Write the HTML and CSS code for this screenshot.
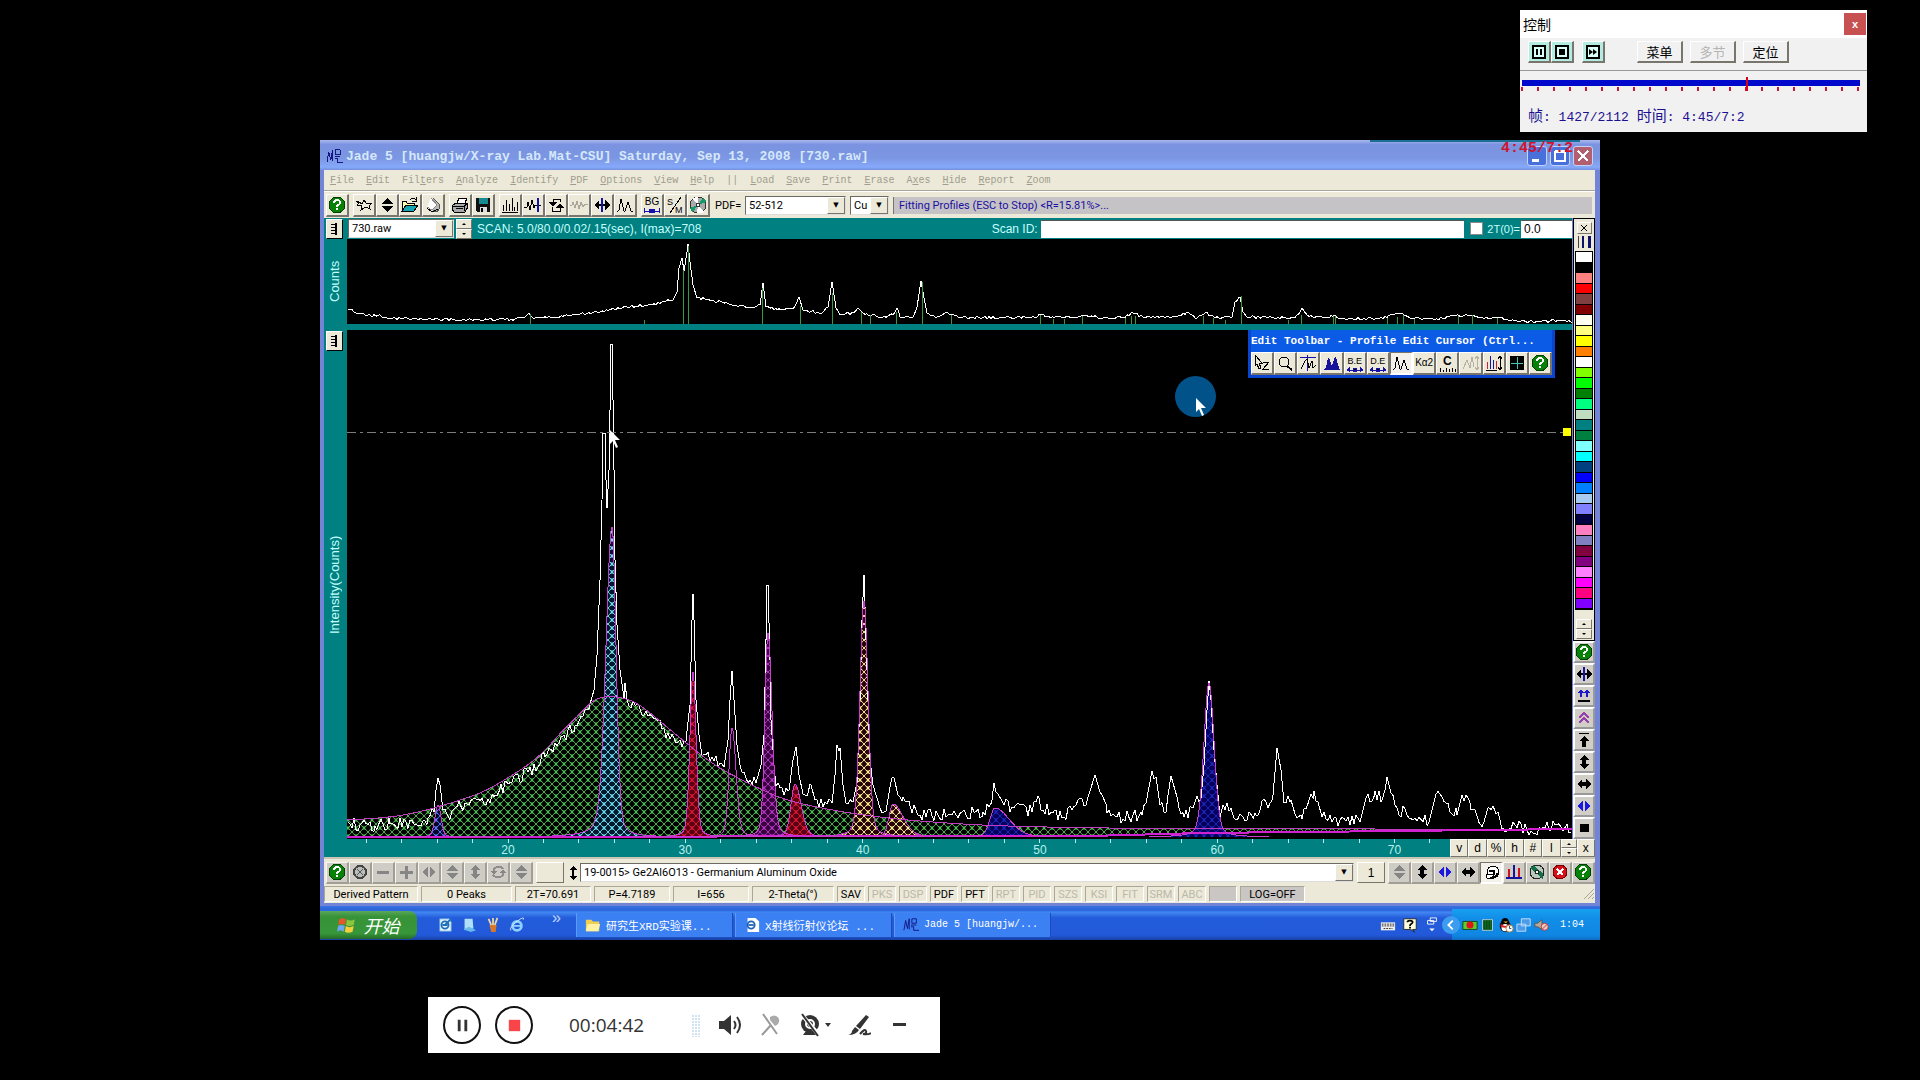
FILE: index.html
```html
<!DOCTYPE html>
<html lang="zh">
<head>
    <meta charset="UTF-8">
    <meta name="viewport" content="width=device-width, initial-scale=1.0">
    <title>Jade 5</title>
    <link rel="stylesheet" href="styles.css">
</head>
<body>
    <svg class="defs" width="0" height="0" aria-hidden="true">
        <symbol id="i-help" viewBox="0 0 18 18"><circle cx="9" cy="9" r="8" fill="#078207" stroke="#063f06"/><path d="M6 7q0-3 3-3t3 3q0 1-2 2-1 1-1 2 M9 12v2" fill="none" stroke="#fff" stroke-width="2"/></symbol>
        <symbol id="i-star" viewBox="0 0 18 18"><path d="M1 5l3 1 3 2 2-4 2 3h6l-3 3 1 3-4-2-5 3 1-4-5-1 2-2z" fill="none" stroke="#000"/></symbol>
        <symbol id="i-ud" viewBox="0 0 18 18"><path d="M9 2l6 6H3z M9 16l6-6H3z"/></symbol>
        <symbol id="i-open" viewBox="0 0 18 18"><path d="M1 15V5h4l1 2h7v3" fill="#ffffb0" stroke="#000"/><path d="M1 15l4-6h12l-4 6z" fill="#12a6b5" stroke="#000"/><path d="M9 4q3-3 6 0 M15 1v4h-4" fill="none" stroke="#000"/></symbol>
        <symbol id="i-disk" viewBox="0 0 18 18"><path d="M9 2l7 7q0 6-5 7l-2-2" fill="#b8b8b8" stroke="#555"/><path d="M7 2l6 7-5 5-5-3" fill="#fff" stroke="#888"/><path d="M3 12l5 4 6-3" fill="none" stroke="#000"/></symbol>
        <symbol id="i-print" viewBox="0 0 18 18"><path d="M6 7l2-5h8l-2 5" fill="#fff" stroke="#000"/><path d="M2 9l3-2h11l1 4-3 5H3l-2-3z" fill="#aaa" stroke="#000"/><path d="M2 10h11v5 M5 12h7 M13 10l3-2" fill="none" stroke="#000"/></symbol>
        <symbol id="i-save" viewBox="0 0 18 18"><path d="M2 2h14v14H3l-1-1z" fill="#111"/><path d="M5 2h9v6H5z" fill="#168b91"/><path d="M6 11h7v5H6z" fill="#ddd"/><path d="M7 12h2v4H7z"/></symbol>
        <symbol id="i-sticks" viewBox="0 0 18 18"><path d="M1 16h16 M2 15V9 M5 15V4 M8 15V8 M11 15V2 M13 15v-4 M16 15V6" fill="none" stroke="#000"/></symbol>
        <symbol id="i-wave" viewBox="0 0 18 18"><path d="M0 11h3l1-5 2 8 2-10 2 8 1-3h6" fill="none" stroke="#000"/><path d="M14 2v14" stroke="#1412a8" stroke-width="2"/></symbol>
        <symbol id="i-swap" viewBox="0 0 18 18"><path d="M13 6V3H6v4 M5 11v4h8v-3" fill="none" stroke="#000"/><path d="M2 6h8l-4 5z M9 12h8l-4-5z"/></symbol>
        <symbol id="i-noise" viewBox="0 0 18 18"><path d="M0 9h2l1-3 2 6 2-7 2 8 2-7 2 5 2-3h3" fill="none" stroke="#aaa69a"/></symbol>
        <symbol id="i-split" viewBox="0 0 18 18"><path d="M9 2v14" stroke="#1412a8" stroke-width="2"/><path d="M1 9l5-5v10z M17 9l-5-5v10z"/><path d="M4 8h4v2H4z M10 8h4v2h-4z"/></symbol>
        <symbol id="i-peaks" viewBox="0 0 18 18"><path d="M1 16l2-2 2-11 3 12h1l3-9 3 9 2 1" fill="none" stroke="#000"/></symbol>
        <symbol id="i-cd" viewBox="0 0 18 18"><circle cx="9" cy="9" r="8" fill="#a9aaa9" stroke="#333"/><path d="M9 9L3 3q3-2 6-2z M9 9l6 7q-4 2-7 1z" fill="#fff"/><path d="M9 9l8-3q0-3-3-4z M9 9l-8 3q1 3 3 4z" fill="#159b6a"/><circle cx="9" cy="9" r="2" fill="#fff" stroke="#333"/></symbol>
        <symbol id="i-scale" viewBox="0 0 14 16"><path d="M4 3h6 M4 6h6 M4 9h6 M4 12h6" stroke="#000" stroke-width="1"/><path d="M9 2v12" stroke="#000" stroke-width="2"/></symbol>
        <symbol id="i-mag" viewBox="0 0 18 18"><circle cx="8" cy="8" r="5" fill="none" stroke="#000"/><path d="M11 12l5 4" stroke="#000" stroke-width="2"/></symbol>
        <symbol id="i-cut" viewBox="0 0 18 18"><path d="M1 3h16 M8 1v16" stroke="#1412a8"/><path d="M2 15l4-8 2-2 2 9 3-7 1 7 3-3" fill="none" stroke="#000"/></symbol>
        <symbol id="i-fill" viewBox="0 0 18 18"><path d="M1 16l2-3 2-9h1l3 8 3-9h1l3 11 1 2z" fill="#15139b"/></symbol>
        <symbol id="i-pkud" viewBox="0 0 18 18"><path d="M1 15l4-9 3 8 2-11 2 10 M15 3v12 M13 5l2-3 2 3 M13 13l2 3 2-3" fill="none" stroke="#b5b1a4"/></symbol>
        <symbol id="i-stkud" viewBox="0 0 18 18"><path d="M1 16h11 M15 3v12 M13 5l2-3 2 3 M13 13l2 3 2-3" fill="none" stroke="#000"/><path d="M2 15V8 M11 15V7" stroke="#d02030"/><path d="M5 15V2 M8 15V6" stroke="#1412a8"/></symbol>
        <symbol id="i-grid" viewBox="0 0 18 18"><path d="M2 2h14v14H2z"/><path d="M9 3v12 M3 9h12" stroke="#49c4b0"/></symbol>
        <symbol id="i-up2" viewBox="0 0 18 18"><path d="M3 14h12" stroke="#000" stroke-width="2"/><path d="M5 5h2v5H5z M11 5h2v5h-2z M3 6l3-4 3 4z M9 6l3-4 3 4z" fill="#1b18c8"/></symbol>
        <symbol id="i-chev" viewBox="0 0 18 18"><path d="M4 9l5-5 5 5 M4 14l5-5 5 5" fill="none" stroke="#9a3fae" stroke-width="2"/></symbol>
        <symbol id="i-top" viewBox="0 0 18 18"><path d="M4 2h10v1H4z M9 5l5 5h-3v6H7v-6H4z"/></symbol>
        <symbol id="i-v" viewBox="0 0 18 18"><path d="M9 2l5 5h-3v4h3l-5 5-5-5h3V7H4z"/></symbol>
        <symbol id="i-h" viewBox="0 0 18 18"><path d="M2 9l5-5v3h4V4l5 5-5 5v-3H7v3z"/></symbol>
        <symbol id="i-lr" viewBox="0 0 18 18"><path d="M2 9l6-5v10z M16 9l-6-5v10z"/></symbol>
        <symbol id="i-sq" viewBox="0 0 18 18"><path d="M5 5h9v8H5z"/></symbol>
        <symbol id="i-x" viewBox="0 0 18 18"><circle cx="9" cy="9" r="6" fill="#bbb" stroke="#444" stroke-width="2"/><path d="M6 6l6 6 M12 6l-6 6" stroke="#555"/></symbol>
        <symbol id="i-minus" viewBox="0 0 18 18"><path d="M3 8h12v3H3z"/></symbol>
        <symbol id="i-plus" viewBox="0 0 18 18"><path d="M3 8h5V3h3v5h5v3h-5v5H8v-5H3z"/></symbol>
        <symbol id="i-loop" viewBox="0 0 18 18"><path d="M14 6q-4-5-9 0v3 M4 12q5 5 10 0V9" fill="none" stroke="#8d8d8d" stroke-width="2"/><path d="M2 8h6l-3 4z M11 10h6l-3-4z"/></symbol>
        <symbol id="i-ball" viewBox="0 0 18 18"><circle cx="11" cy="9" r="6" fill="#fff" stroke="#000"/><path d="M4 11h7v4H5z" fill="#fff" stroke="#000"/><path d="M7 8h5v4 M8 15l5-1 3-4" fill="none" stroke="#000" stroke-width="2"/></symbol>
        <symbol id="i-bars" viewBox="0 0 18 18"><path d="M1 15h16" stroke="#15139b" stroke-width="2"/><path d="M4 14V6" stroke="#d01020" stroke-width="2"/><path d="M9 14V2" stroke="#15139b" stroke-width="2"/><path d="M14 14V5" stroke="#d01020" stroke-width="2"/></symbol>
        <symbol id="i-disc" viewBox="0 0 18 18"><circle cx="9" cy="9" r="7" fill="#b9c7bd" stroke="#222"/><path d="M3 4l12 11 M5 3l10 9" stroke="#12704a" stroke-width="2"/><circle cx="9" cy="9" r="2" fill="#fff" stroke="#222"/></symbol>
        <symbol id="i-stop" viewBox="0 0 18 18"><circle cx="9" cy="9" r="7" fill="#d9101c" stroke="#700"/><path d="M6 6l6 6 M12 6l-6 6" stroke="#fff" stroke-width="2"/></symbol>
        <symbol id="i-jade" viewBox="0 0 18 18"><path d="M1 15l2-11 2 9 2-11v12 M10 2h5v5h-5z M9 9h6 M9 11h3v4h6" fill="none" stroke="#10107a" stroke-width="1"/></symbol>
        <symbol id="i-ie" viewBox="0 0 18 18"><circle cx="9" cy="10" r="5" fill="none" stroke="#8fd2ff" stroke-width="3"/><path d="M5 10h9" stroke="#8fd2ff" stroke-width="2"/><path d="M2 15Q0 12 9 5t7-2" fill="none" stroke="#d8f0ff"/></symbol>
        <symbol id="i-cursor" viewBox="0 0 12 20"><path d="M1 1v14l3-3 3 7 2-1-3-7h5z" fill="#fff"/></symbol>
    </svg>

    <section class="control">
        <header class="control-title"><span>控制</span><button class="control-close" aria-label="关闭">x</button></header>
        <div class="control-buttons">
            <button class="mini" aria-label="pause"><svg viewBox="0 0 18 18"><path d="M3 3h12v12H3z" fill="#d8fff8" stroke="#000" stroke-width="2"/><path d="M6 6h2v6H6z M10 6h2v6h-2z"/></svg></button>
            <button class="mini" aria-label="stop"><svg viewBox="0 0 18 18"><path d="M3 3h12v12H3z" fill="#d8fff8" stroke="#000" stroke-width="2"/><path d="M6 6h6v6H6z"/></svg></button>
            <button class="mini mini-ff" aria-label="forward"><svg viewBox="0 0 18 18"><path d="M3 3h12v12H3z" fill="#d8fff8" stroke="#000" stroke-width="2"/><path d="M5 6l4 3-4 3z M9 6l4 3-4 3z"/></svg></button>
            <button class="word word-first">菜单</button>
            <button class="word" disabled>多节</button>
            <button class="word">定位</button>
        </div>
        <svg class="control-track" id="track" aria-hidden="true"></svg>
        <p class="control-info"><b>帧</b>: 1427/2112 <b>时间</b>: 4:45/7:2</p>
    </section>

    <main class="screen">
        <section class="jade">
            <header class="title">
                <svg class="title-icon"><use href="#i-jade"/></svg>
                <h1>Jade 5 [huangjw/X-ray Lab.Mat-CSU] Saturday, Sep 13, 2008 [730.raw]</h1>
                <button class="cap" aria-label="minimize"><svg viewBox="0 0 18 18"><path d="M4 12h7v3H4z" fill="#fff"/></svg></button>
                <button class="cap" aria-label="maximize"><svg viewBox="0 0 18 18"><path d="M4 5h10v9H4z M4 4h10" fill="none" stroke="#fff" stroke-width="2"/></svg></button>
                <button class="cap cap-close" aria-label="close"><svg viewBox="0 0 18 18"><path d="M4 4l10 10 M14 4L4 14" stroke="#fff" stroke-width="2"/></svg></button>
            </header>
            <span class="stamp-line"></span>
            <span class="stamp">4:45/7:2</span>

            <nav class="menu">
                <a href="#"><u>F</u>ile</a><a href="#"><u>E</u>dit</a><a href="#">Fil<u>t</u>ers</a><a href="#"><u>A</u>nalyze</a><a href="#"><u>I</u>dentify</a><a href="#"><u>P</u>DF</a><a href="#"><u>O</u>ptions</a><a href="#"><u>V</u>iew</a><a href="#"><u>H</u>elp</a><a href="#">||</a><a href="#"><u>L</u>oad</a><a href="#"><u>S</u>ave</a><a href="#"><u>P</u>rint</a><a href="#"><u>E</u>rase</a><a href="#">A<u>x</u>es</a><a href="#"><u>H</u>ide</a><a href="#"><u>R</u>eport</a><a href="#"><u>Z</u>oom</a>
            </nav>

            <div class="toolbar">
                <div class="group"><button class="tb" aria-label="help"><svg><use href="#i-help"/></svg></button></div>
                <div class="group">
                    <button class="tb" aria-label="thumbnail"><svg><use href="#i-star"/></svg></button>
                    <button class="tb" aria-label="next file"><svg><use href="#i-ud"/></svg></button>
                    <button class="tb" aria-label="open"><svg><use href="#i-open"/></svg></button>
                    <button class="tb" aria-label="read"><svg><use href="#i-disk"/></svg></button>
                </div>
                <div class="group">
                    <button class="tb" aria-label="print"><svg><use href="#i-print"/></svg></button>
                    <button class="tb" aria-label="save"><svg><use href="#i-save"/></svg></button>
                </div>
                <div class="group">
                    <button class="tb" aria-label="find peaks"><svg><use href="#i-sticks"/></svg></button>
                    <button class="tb" aria-label="smooth"><svg><use href="#i-wave"/></svg></button>
                    <button class="tb" aria-label="swap"><svg><use href="#i-swap"/></svg></button>
                    <button class="tb" aria-label="strip"><svg><use href="#i-noise"/></svg></button>
                    <button class="tb" aria-label="calibrate"><svg><use href="#i-split"/></svg></button>
                    <button class="tb" aria-label="fit profile"><svg><use href="#i-peaks"/></svg></button>
                </div>
                <div class="group">
                    <button class="tb tb-text" aria-label="background">BG<svg viewBox="0 0 18 5"><path d="M1 3h16 M1 0v5 M16 0v5 M6 1h5v3H6z" fill="#1412a8" stroke="#1412a8"/></svg></button>
                    <button class="tb" aria-label="search match"><svg viewBox="0 0 18 18"><path d="M15 1L4 17" stroke="#000"/><text x="1" y="9" font-family="Liberation Sans" font-size="9">S</text><text x="9" y="17" font-family="Liberation Sans" font-size="9">M</text></svg></button>
                    <button class="tb" aria-label="PDF disc"><svg><use href="#i-cd"/></svg></button>
                </div>
                <label class="pdf-label" for="pdf">PDF=</label>
                <span class="combo combo-pdf"><select id="pdf"><option>52-512</option></select></span>
                <span class="combo combo-cu"><select aria-label="anode"><option>Cu</option></select></span>
                <output class="progress">Fitting Profiles (ESC to Stop) &lt;R=15.81%&gt;...</output>
            </div>

            <div class="upper">
                <div class="work">
                    <div class="scanbar">
                        <button class="ruler" aria-label="scale"><svg><use href="#i-scale"/></svg></button>
                        <span class="combo combo-file"><select aria-label="file"><option>730.raw</option></select></span>
                        <span class="spin"><button class="up" aria-label="up"></button><button class="down" aria-label="down"></button></span>
                        <span class="scan-text">SCAN: 5.0/80.0/0.02/.15(sec), I(max)=708</span>
                        <label class="scan-label" for="scanid">Scan ID:</label>
                        <input class="scan-id" id="scanid" type="text">
                        <input class="tick" id="use2t" type="checkbox">
                        <label class="zero-label" for="use2t">2T(0)=</label>
                        <input class="zero" type="text" value="0.0" aria-label="2T(0)">
                    </div>
                    <div class="plot-row plot-row-small">
                        <div class="ylabel"><span>Counts</span></div>
                        <svg class="plot" id="overview" viewBox="347 239 1225 85" preserveAspectRatio="none"></svg>
                    </div>
                    <div class="plot-row plot-row-main">
                        <div class="ylabel ylabel-main"><button class="ruler" aria-label="scale"><svg><use href="#i-scale"/></svg></button><span>Intensity(Counts)</span></div>
                        <svg class="plot" id="main" viewBox="347 330 1225 509" preserveAspectRatio="none"></svg>
                    </div>
                </div>
                <aside class="side">
                    <div class="palette">
                        <button class="palette-close" aria-label="close palette"><svg viewBox="0 0 8 8"><path d="M1 1l6 6 M7 1L1 7" stroke="#000"/></svg></button>
                        <svg class="palette-lines" viewBox="0 0 16 14"><path d="M2 1v12" stroke="#444"/><path d="M7 1v12" stroke="#10106a" stroke-width="2"/><path d="M13 1v12" stroke="#10106a" stroke-width="3"/></svg>
                        <div class="swatches" id="swatches"></div>
                        <span class="spin"><button class="up" aria-label="up"></button><button class="down" aria-label="down"></button></span>
                    </div>
                    <button class="sb" aria-label="help"><svg><use href="#i-help"/></svg></button>
                    <button class="sb" aria-label="expand"><svg><use href="#i-split"/></svg></button>
                    <button class="sb" aria-label="raise"><svg><use href="#i-up2"/></svg></button>
                    <button class="sb" aria-label="stack"><svg><use href="#i-chev"/></svg></button>
                    <button class="sb" aria-label="top"><svg><use href="#i-top"/></svg></button>
                    <button class="sb" aria-label="vertical"><svg><use href="#i-v"/></svg></button>
                    <button class="sb" aria-label="horizontal"><svg><use href="#i-h"/></svg></button>
                    <button class="sb blue" aria-label="pan"><svg><use href="#i-lr"/></svg></button>
                    <button class="sb" aria-label="full"><svg><use href="#i-sq"/></svg></button>
                </aside>
            </div>

            <div class="axis-row">
                <svg class="axis" id="axis"></svg>
                <div class="axis-buttons">
                    <button>v</button><button>d</button><button>%</button><button>h</button><button>#</button><button>l</button><span class="spin"><button class="up" aria-label="up"></button><button class="down" aria-label="down"></button></span><button>x</button>
                </div>
            </div>

            <div class="phase-bar">
                <button class="gb" aria-label="help"><svg><use href="#i-help"/></svg></button>
                <button class="gb" aria-label="clear"><svg><use href="#i-x"/></svg></button>
                <button class="gb dim" aria-label="remove"><svg><use href="#i-minus"/></svg></button>
                <button class="gb dim" aria-label="add"><svg><use href="#i-plus"/></svg></button>
                <button class="gb dim" aria-label="left right"><svg><use href="#i-lr"/></svg></button>
                <button class="gb dim" aria-label="up down"><svg><use href="#i-ud"/></svg></button>
                <button class="gb dim" aria-label="stretch"><svg><use href="#i-v"/></svg></button>
                <button class="gb dim" aria-label="cycle"><svg><use href="#i-loop"/></svg></button>
                <button class="gb dim" aria-label="step"><svg><use href="#i-ud"/></svg></button>
                <button class="blank" aria-label="blank"></button>
                <svg class="updown" viewBox="0 0 13 18"><path d="M6 4v10" stroke="#000" stroke-width="2"/><path d="M2 6l4-4 4 4z M2 12l4 4 4-4z"/></svg>
                <span class="combo combo-phase"><select aria-label="phase"><option>19-0015&gt; Ge2Al6O13 - Germanium Aluminum Oxide</option></select></span>
                <button class="blank">1</button>
                <button class="gb dim" aria-label="step"><svg><use href="#i-ud"/></svg></button>
                <button class="gb" aria-label="height"><svg><use href="#i-v"/></svg></button>
                <button class="gb blue" aria-label="shift"><svg><use href="#i-lr"/></svg></button>
                <button class="gb" aria-label="width"><svg><use href="#i-h"/></svg></button>
                <button class="gb pressed" aria-label="erase"><svg><use href="#i-ball"/></svg></button>
                <button class="gb" aria-label="sticks"><svg><use href="#i-bars"/></svg></button>
                <button class="gb" aria-label="disc"><svg><use href="#i-disc"/></svg></button>
                <button class="gb" aria-label="stop"><svg><use href="#i-stop"/></svg></button>
                <button class="gb" aria-label="help"><svg><use href="#i-help"/></svg></button>
            </div>

            <footer class="status">
                <span class="c-pattern">Derived Pattern</span><span class="c-peaks">0 Peaks</span><span class="c-num">2T=70.691</span><span class="c-num">P=4.7189</span><span class="c-num">I=656</span><span class="c-theta">2-Theta(°)</span>
                <span class="flag on">SAV</span><span class="flag">PKS</span><span class="flag">DSP</span><span class="flag on">PDF</span><span class="flag on">PFT</span><span class="flag">RPT</span><span class="flag">PID</span><span class="flag">SZS</span><span class="flag">KSI</span><span class="flag">FIT</span><span class="flag">SRM</span><span class="flag">ABC</span><span class="flag gray"></span><span class="log gray">LOG=OFF</span>
                <svg class="grip" viewBox="0 0 12 12"><path d="M11 1L1 11 M11 5l-6 6 M11 9l-2 2" stroke="#aaa691"/></svg>
            </footer>

            <section class="edit-bar">
                <h2>Edit Toolbar - Profile Edit Cursor (Ctrl...</h2>
                <div class="edit-tools">
                    <button class="tb" aria-label="cursor"><svg viewBox="0 0 18 18"><path d="M2 1l7 8H6l2 5-2 1-2-5-2 2z" fill="none" stroke="#000"/><path d="M10 8h6l-6 7h6" fill="none" stroke="#000"/></svg></button>
                    <button class="tb" aria-label="zoom"><svg><use href="#i-mag"/></svg></button>
                    <button class="tb" aria-label="cut"><svg><use href="#i-cut"/></svg></button>
                    <button class="tb" aria-label="area"><svg><use href="#i-fill"/></svg></button>
                    <button class="tb tb-text tb-small">B.E<svg viewBox="0 0 18 5"><path d="M1 3h16 M7 1h3v3H7z" stroke="#1412a8"/><path d="M0 3l4-3v5z M18 3l-4-3v5z" fill="#1412a8"/></svg></button>
                    <button class="tb tb-text tb-small">D.E<svg viewBox="0 0 18 5"><path d="M1 3h16 M7 1h3v3H7z" stroke="#1412a8"/><path d="M0 3l4-3v5z M18 3l-4-3v5z" fill="#1412a8"/></svg></button>
                    <button class="tb pressed" aria-label="profile"><svg><use href="#i-peaks"/></svg></button>
                    <button class="tb tb-text">Kα2</button>
                    <button class="tb tb-text tb-bold">C<svg viewBox="0 0 18 5"><path d="M2 1v4 M5 3v2 M8 1v4 M11 2v3 M14 1v4 M17 2v3" stroke="#000"/></svg></button>
                    <button class="tb" aria-label="scale peaks"><svg><use href="#i-pkud"/></svg></button>
                    <button class="tb" aria-label="scale sticks"><svg><use href="#i-stkud"/></svg></button>
                    <button class="tb" aria-label="grid"><svg><use href="#i-grid"/></svg></button>
                    <button class="tb" aria-label="help"><svg><use href="#i-help"/></svg></button>
                </div>
            </section>
        </section>

        <footer class="taskbar">
            <button class="start"><svg viewBox="0 0 18 18"><path d="M2 4q3-2 6 0L7 9Q4 7 1 9z" fill="#e8562a"/><path d="M9 4q3 2 7 0l-1 5q-4 2-7 0z" fill="#8cc63e"/><path d="M1 10q3-2 6 0l-1 5q-3-2-6 0z" fill="#6fa8ee"/><path d="M8 10q3 2 7 0l-1 5q-4 2-7 0z" fill="#f6cf3a"/></svg><i>开始</i></button>
            <div class="quick">
                <a href="#" aria-label="Mail"><svg viewBox="0 0 18 18"><path d="M3 2h11l2 4v10H3z" fill="#e6f3ff" stroke="#5b9bd8"/><circle cx="9" cy="9" r="4" fill="none" stroke="#1a6fb6" stroke-width="2"/><path d="M6 9h6 M9 9l6-6" stroke="#1a6fb6" stroke-width="2"/></svg></a>
                <a href="#" aria-label="Desktop"><svg viewBox="0 0 18 18"><path d="M4 2h9l1 11-10 2z" fill="#aee0fa"/><path d="M3 14l6-3 8 4-6 2z" fill="#69b9ea"/></svg></a>
                <a href="#" aria-label="Paint"><svg viewBox="0 0 18 18"><path d="M5 9h8l-1 8H7z" fill="#d8792a"/><path d="M7 9L4 2 M9 9V1 M11 9l3-8" stroke="#f0d8a0" stroke-width="2"/></svg></a>
                <a href="#" aria-label="Internet"><svg><use href="#i-ie"/></svg></a>
            </div>
            <span class="more">»</span>
            <button class="task"><svg viewBox="0 0 18 18"><path d="M1 3h6l2 2h7v11H1z" fill="#f3cf4f"/><path d="M3 8h14l-2 8H1z" fill="#fff2a4"/></svg>研究生XRD实验课...</button>
            <button class="task"><svg viewBox="0 0 18 18"><path d="M4 1h9l4 4v12H4z" fill="#fff"/><circle cx="8" cy="9" r="4" fill="none" stroke="#1c62b8" stroke-width="2"/><path d="M5 9h6" stroke="#1c62b8" stroke-width="2"/></svg>X射线衍射仪论坛 ...</button>
            <button class="task task-jade"><svg><use href="#i-jade"/></svg>Jade 5 [huangjw/...</button>
            <div class="lang">
                <svg viewBox="0 0 18 18"><path d="M1 6h16v9H1z" fill="#eee"/><path d="M2 8h14 M2 10h14 M4 13h10" stroke="#222" stroke-dasharray="2 1"/></svg>
                <svg viewBox="0 0 18 18"><path d="M2 2h14v12h-4l2 3-4-3H2z" fill="#ffffe0" stroke="#222"/><path d="M6 6q0-2 3-2t3 2q0 1-2 2-1 0-1 2 M9 11v2" fill="none" stroke="#000" stroke-width="2"/></svg>
                <svg viewBox="0 0 18 18"><path d="M7 1h7v4H7z M4 4h7v4H4z" fill="#2258d6" stroke="#fff"/><path d="M6 13h6l-3 3z" fill="#fff"/></svg>
            </div>
            <div class="tray">
                <button class="tray-arrow" aria-label="show icons"><svg viewBox="0 0 18 18"><path d="M11 4L6 9l5 5" fill="none" stroke="#fff" stroke-width="2"/></svg></button>
                <svg viewBox="0 0 18 18"><path d="M1 5h16v9H1z" fill="#5bcf30" stroke="#173d10"/><circle cx="9" cy="9" r="4" fill="#e0151c"/></svg>
                <svg viewBox="0 0 18 18"><path d="M3 3h11v12H3z" fill="#0a4a14" stroke="#cde"/><path d="M6 3v12 M9 3v12 M12 3v12" stroke="#147a25"/></svg>
                <svg viewBox="0 0 18 18"><ellipse cx="8" cy="10" rx="6" ry="7" fill="#111"/><circle cx="8" cy="5" r="4"/><ellipse cx="8" cy="12" rx="4" ry="4" fill="#fff"/><path d="M3 8q5 4 10 0v3q-5 2-10 0z" fill="#e02020"/><path d="M6 5h5l-2 2z" fill="#f5b010"/><circle cx="13" cy="13" r="4" fill="#fff" stroke="#b67a3a"/><path d="M13 10v3h2" fill="none" stroke="#333"/></svg>
                <svg viewBox="0 0 18 18"><path d="M6 2h10v8H6z M1 8h10v8H1z" fill="#4d9ae8" stroke="#c9e4fa"/></svg>
                <svg viewBox="0 0 18 18"><path d="M1 7h3l5-4v11l-5-3H1z" fill="#b8a89a" stroke="#555"/><circle cx="12" cy="11" r="4" fill="#e8c8c0" stroke="#b33"/><path d="M9 14l6-6" stroke="#b33"/></svg>
                <time>1:04</time>
            </div>
        </footer>

        <svg class="pointer pointer-plot"><use href="#i-cursor"/></svg>
        <div class="halo"><svg class="pointer"><use href="#i-cursor"/></svg></div>
    </main>

    <section class="recorder">
        <button class="round" aria-label="pause"><svg viewBox="0 0 18 18"><path d="M4 3h3v12H4z M11 3h3v12h-3z" fill="#333"/></svg></button>
        <button class="round" aria-label="stop"><svg viewBox="0 0 18 18"><path d="M3 3h12v12H3z" fill="#f94449"/></svg></button>
        <time>00:04:42</time>
        <span class="level"></span>
        <button class="rec" aria-label="volume"><svg viewBox="0 0 24 24"><path d="M1 8h5l7-6v20l-7-6H1z" fill="#333"/><path d="M16 8q3 4 0 8 M19 4q6 8 0 16" fill="none" stroke="#333" stroke-width="2"/></svg></button>
        <button class="rec" aria-label="microphone off"><svg viewBox="0 0 24 24"><path d="M12 4q6-4 9 2 1 5-4 7l-5-6z" fill="#aaa"/><path d="M13 12l-9 10 M5 1l14 20" fill="none" stroke="#999" stroke-width="2"/></svg></button>
        <button class="rec rec-menu" aria-label="camera off"><svg viewBox="0 0 24 24"><circle cx="12" cy="11" r="9" fill="#333"/><path d="M5 22h13l-3-4H8z" fill="#333"/><circle cx="12" cy="11" r="4" fill="none" stroke="#fff" stroke-width="2"/><path d="M4 2l17 20" stroke="#fff" stroke-width="4"/><path d="M4 1l16 22" stroke="#333" stroke-width="2"/></svg><svg class="rec-arrow" viewBox="0 0 6 4"><path d="M0 0h6L3 4z" fill="#333"/></svg></button>
        <button class="rec" aria-label="pen"><svg viewBox="0 0 24 24"><path d="M19 2l3 2-9 12-4-3z M8 14l4 3q-3 5-11 5 4-1 4-4z" fill="#333"/><path d="M13 21q5-6 6-3t-3 3q5 1 8-1" fill="none" stroke="#333" stroke-width="2"/></svg></button>
        <button class="rec" aria-label="minimize"><svg viewBox="0 0 24 24"><path d="M6 10h13v3H6z" fill="#333"/></svg></button>
    </section>

    <script src="script.js"></script>
</body>
</html>
```
FILE: styles.css
```css
* {
    box-sizing: border-box;
}

body {
    margin: 0;
    min-height: 100vh;
    background: #000;
    position: relative;
    overflow: hidden;
    font-family: "Liberation Sans", "Noto Sans CJK SC", sans-serif;
    font-size: 12px;
    color: #000;
}

button, select, input {
    font: inherit;
    color: inherit;
    margin: 0;
    padding: 0;
    border-radius: 0;
}

button {
    display: flex;
    align-items: center;
    justify-content: center;
    border: 1px solid;
    border-color: #fff #77756c #77756c #fff;
    background: #ece9d8;
}

h1, h2, p {
    margin: 0;
}

svg {
    display: block;
    flex-shrink: 0;
}

.defs {
    position: absolute;
}

/* playback control window */
.control {
    position: absolute;
    top: 10px;
    right: 53px;
    width: 347px;
    height: 122px;
    background: #f1f1f1;
}

.control-title {
    display: flex;
    justify-content: space-between;
    align-items: center;
    height: 28px;
    padding: 0 1px 0 3px;
    background: #fff;
    font-size: 14px;
}

.control-close {
    width: 22px;
    height: 22px;
    border: none;
    background: #c75050;
    color: #fff;
    font-weight: bold;
    font-size: 11px;
}

.control-buttons {
    display: flex;
    align-items: center;
    height: 33px;
    padding: 0 8px 4px;
    border-bottom: 1px solid #999;
}

.mini {
    width: 23px;
    height: 22px;
    border-width: 1px 2px 2px 1px;
    background: #b4ece2;
}

.mini svg {
    width: 18px;
    height: 18px;
}

.mini-ff {
    margin-left: 8px;
}

.word {
    width: 46px;
    height: 22px;
    margin-right: 7px;
    border-width: 1px 2px 2px 1px;
    background: #f1f1f1;
    font-size: 13px;
}

.word-first {
    margin-left: 32px;
}

.word:disabled {
    color: #b5b5b5;
}

.control-track {
    width: 100%;
    height: 30px;
}

.control-info {
    padding: 8px 8px 0;
    font-family: "Liberation Mono", "Noto Sans CJK SC", monospace;
    font-size: 13px;
    line-height: 18px;
    color: #1d1191;
}

.control-info b {
    font-weight: normal;
    font-size: 15px;
}

/* recorded desktop */
.screen {
    position: absolute;
    top: 140px;
    bottom: 140px;
    left: calc(100% / 6);
    right: calc(100% / 6);
    display: flex;
    flex-direction: column;
}

.jade {
    flex: 1;
    min-height: 0;
    display: flex;
    flex-direction: column;
    position: relative;
    padding: 0 5px 3px 4px;
    background: #7284d6;
}

.jade svg {
    shape-rendering: crispEdges;
}

.title {
    display: flex;
    align-items: center;
    height: 30px;
    margin: 0 -5px 0 -4px;
    padding: 2px 7px 0 6px;
    gap: 3px;
    background: linear-gradient(#a9b8ee, #7b93e0 15%, #7b96e2 60%, #86a9fa 90%, #7590dd);
}

.title h1 {
    flex: 1;
    font: bold 13px "Liberation Mono", monospace;
    color: #d6e8fb;
}

.title-icon {
    width: 17px;
    height: 17px;
}

.cap {
    width: 20px;
    height: 20px;
    border: 1px solid #c5d3f6;
    border-radius: 3px;
    background: #4870da;
}

.cap-close {
    background: #b45f70;
}

.cap svg {
    width: 18px;
    height: 18px;
}

.stamp {
    position: absolute;
    top: 0;
    right: 27px;
    font: bold 15px "Liberation Mono", monospace;
    color: #d0142c;
}

.stamp-line {
    position: absolute;
    top: 0;
    right: 20px;
    width: 210px;
    height: 2px;
    background: #1c6f94;
}

.menu {
    display: flex;
    gap: 12px;
    height: 21px;
    padding: 0 6px;
    align-items: center;
    background: #ece9d8;
    border-bottom: 1px solid #a9a698;
    font: 10px "Liberation Mono", monospace;
}

.menu a {
    color: #a09d8f;
    text-decoration: none;
}

.toolbar {
    display: flex;
    align-items: center;
    gap: 4px;
    height: 27px;
    padding: 0 3px 0 2px;
    background: #ece9d8;
    border-top: 1px solid #fff;
    font-family: Roboto, sans-serif;
    font-size: 11px;
}

.pdf-label {
    width: 27px;
    padding-left: 1px;
}

.group {
    display: flex;
}

.tb {
    width: 23px;
    height: 23px;
    border-width: 1px 2px 2px 1px;
}

.tb svg {
    width: 18px;
    height: 18px;
}

.tb-text {
    flex-direction: column;
    font: 10px/12px "Liberation Sans", "DejaVu Sans", sans-serif;
}

.tb-text svg {
    height: 5px;
}

.tb-small {
    font-size: 9px;
}

.tb-bold {
    font-size: 12px;
    font-weight: bold;
}

.combo {
    position: relative;
    display: flex;
    height: 19px;
    background: #fff;
    border: 1px solid;
    border-color: #6c6a62 #ddd #ddd #6c6a62;
    font-family: Roboto, sans-serif;
}

.combo select {
    appearance: none;
    width: 100%;
    border: none;
    padding-left: 3px;
    background: transparent;
    font-size: 11px;
}

.combo::after {
    content: "▼";
    position: absolute;
    top: 0;
    right: 0;
    bottom: 0;
    width: 16px;
    border: 1px solid;
    border-color: #fff #77756c #77756c #fff;
    background: #ece9d8;
    font: 7px/15px "DejaVu Sans", sans-serif;
    text-align: center;
    pointer-events: none;
}

.combo-pdf {
    width: 101px;
}

.combo-cu {
    width: 39px;
}

.progress {
    flex: 1;
    height: 17px;
    padding-left: 5px;
    background: #c5c3c6;
    border-left: 1px solid #77756c;
    line-height: 17px;
    color: #1b0fa0;
}

.upper {
    flex: 1;
    min-height: 0;
    display: flex;
}

.work {
    flex: 1;
    display: flex;
    flex-direction: column;
    background: #008080;
}

.scanbar {
    display: flex;
    align-items: center;
    height: 21px;
    padding-left: 2px;
    color: #c4ffff;
}

.scanbar .combo, .scanbar input {
    color: #000;
}

.ruler {
    width: 17px;
    height: 20px;
    border-color: #fff #000 #000 #fff;
}

.ruler svg {
    width: 14px;
    height: 16px;
}

.combo-file {
    width: 106px;
    margin: 0 2px 0 5px;
}

.spin {
    display: flex;
    flex-direction: column;
    width: 16px;
    height: 20px;
}

.spin button {
    flex: 1;
}

.up::before, .down::before {
    content: "";
    border: 2px solid transparent;
}

.up::before {
    border-top: none;
    border-bottom-color: #000;
}

.down::before {
    border-bottom: none;
    border-top-color: #000;
}

.scan-text {
    flex: 1;
    padding-left: 5px;
}

.scan-label {
    padding-right: 3px;
}

.scan-id, .zero {
    height: 18px;
    border: none;
    border-top: 1px solid #555;
    background: #fff;
}

.scan-id {
    width: 34%;
}

.tick {
    appearance: none;
    width: 13px;
    height: 13px;
    margin: 0 4px 0 6px;
    background: #fff;
    border: 1px solid #888;
}

.zero-label {
    font-size: 11px;
}

.zero {
    width: 51px;
    margin-left: 1px;
    padding-left: 3px;
}

.plot-row {
    display: flex;
    min-height: 0;
}

.plot-row-small {
    height: 85px;
    margin-bottom: 6px;
}

.plot-row-main {
    flex: 1;
}

.ylabel {
    display: flex;
    flex-direction: column;
    width: 23px;
    padding-left: 2px;
    color: #c4ffff;
    font-size: 13px;
}

.ylabel-main {
    padding-top: 1px;
    padding-bottom: 21px;
}

.ylabel span {
    flex: 1;
    width: 18px;
    writing-mode: vertical-rl;
    transform: rotate(180deg);
    text-align: center;
    line-height: 18px;
}

.plot {
    flex: 1;
    width: 10px;
    height: 100%;
    background: #000;
}

.side {
    width: 22px;
    margin-left: 1px;
    display: flex;
    flex-direction: column;
}

.palette {
    flex: 1;
    min-height: 0;
    display: flex;
    flex-direction: column;
    align-items: center;
    padding: 3px 2px 1px;
    background: #ece9d8;
    border: 1px solid #000;
}

.palette-close {
    width: 15px;
    height: 12px;
}

.palette-close svg {
    width: 8px;
    height: 8px;
}

.palette-lines {
    width: 16px;
    height: 14px;
    margin: 1px 0 2px;
}

.swatches {
    flex: 1;
    width: 18px;
    margin-bottom: 9px;
    display: flex;
    flex-direction: column;
    border: 1px solid #000;
}

.swatches button {
    flex: 1;
    border: none;
    border-bottom: 1px solid #000;
}

.sb {
    width: 22px;
    height: 22px;
    border-width: 2px;
    border-color: #fff #999 #999 #fff;
    background: #d0cec6;
}

.sb svg {
    width: 18px;
    height: 18px;
}

.blue {
    fill: #1b18e0;
}

.axis-row {
    display: flex;
    height: 18px;
    background: #008080;
}

.axis {
    flex: 1;
    height: 18px;
    margin-left: 23px;
}

.axis line {
    stroke: #b8f0f0;
}

.axis text {
    fill: #b8f0f0;
    font-size: 12px;
    text-anchor: middle;
}

.axis-buttons {
    display: flex;
    width: 145px;
}

.axis-buttons > button {
    flex: 1;
    font-size: 12px;
}

.axis-buttons .spin {
    height: 18px;
}

.phase-bar {
    display: flex;
    align-items: center;
    height: 28px;
    padding: 1px 0 0 2px;
    background: #ece9d8;
    border-top: 2px solid #c9c6b8;
}

.gb {
    width: 23px;
    height: 22px;
    border-width: 1px 2px 2px 1px;
    border-color: #f6f5ef #a09e95 #a09e95 #f6f5ef;
    background: #cfccc5;
}

.gb svg {
    width: 18px;
    height: 18px;
}

.dim {
    fill: #858585;
}

.tb.pressed, .gb.pressed {
    border-color: #77756c #fff #fff #77756c;
    background: #f3f1ea;
}

.blank {
    width: 28px;
    height: 21px;
    margin: 0 3px;
}

.updown {
    width: 13px;
    height: 18px;
}

.combo-phase {
    flex: 1;
}

.status {
    display: flex;
    align-items: center;
    gap: 3px;
    height: 18px;
    background: #ece9d8;
    font-family: Roboto, sans-serif;
    font-size: 11px;
}

.status span {
    height: 16px;
    line-height: 15px;
    text-align: center;
    white-space: nowrap;
    border: 1px solid;
    border-color: #aaa799 #fff #fff #aaa799;
}

.status .c-pattern {
    width: 94px;
}

.status .c-peaks {
    width: 91px;
}

.status .c-num {
    width: 76px;
}

.status .c-theta {
    width: 82px;
}

.status .flag {
    width: 28px;
    color: #bbb8a9;
}

.status .on {
    color: #000;
}

.status .gray {
    background: #c9c6c4;
}

.status .log {
    width: 65px;
    color: #000;
}

.grip {
    width: 12px;
    height: 12px;
    margin-left: auto;
}

/* floating edit toolbar */
.edit-bar {
    position: absolute;
    top: 190px;
    right: 45px;
    width: 307px;
    padding: 0 3px 3px;
    background: #0a45cf;
}

.edit-bar h2 {
    height: 22px;
    font: bold 11px/22px "Liberation Mono", monospace;
    color: #fff;
    background: #0b5be6;
    white-space: nowrap;
}

.edit-tools {
    display: flex;
    background: #ece9d8;
}

.edit-tools .tb {
    flex: 1;
    width: 10px;
}

/* taskbar */
.taskbar {
    display: flex;
    align-items: center;
    height: 34px;
    padding-top: 3px;
    background: linear-gradient(#3a74e0, #2a62dc 12%, #4287f2 18%, #235cdb 35%, #2259da 85%, #1941a5);
    color: #fff;
    font-family: "Liberation Mono", "Noto Sans CJK SC", monospace;
}

.taskbar svg {
    width: 16px;
    height: 16px;
}

.taskbar button {
    border: none;
    color: #fff;
}

.start {
    width: 97px;
    height: 28px;
    gap: 6px;
    border-radius: 0 8px 8px 0;
    background: linear-gradient(#5aa85a, #389238 20%, #37963a 80%, #256b27);
    font-size: 18px;
}

.start svg {
    width: 20px;
    height: 20px;
}

.quick {
    display: flex;
    gap: 8px;
    margin-left: 20px;
}

.more {
    width: 51px;
    padding-left: 12px;
    font-size: 16px;
    line-height: 20px;
    align-self: flex-start;
    color: #bdd4ff;
    text-align: center;
}

.taskbar .task {
    width: 157px;
    height: 24px;
    gap: 5px;
    margin-right: 2px;
    padding-left: 8px;
    justify-content: flex-start;
    background: #3c81f3;
    border-left: 1px solid #5c9af8;
    border-right: 1px solid #1c4cb8;
    font-size: 11px;
    white-space: nowrap;
}

.taskbar .task-jade {
    font-size: 10px;
}

.lang {
    display: flex;
    gap: 6px;
    margin-left: auto;
    margin-right: 12px;
}

.tray {
    display: flex;
    align-items: center;
    gap: 2px;
    height: 31px;
    width: 148px;
    background: linear-gradient(#17a0f0, #128ee8 30%, #0f86e2 85%, #0e6cc4);
}

.tray-arrow {
    width: 18px;
    height: 18px;
    margin-left: -10px;
}

.taskbar .tray-arrow {
    border-radius: 9px;
    background: #3c9cf0;
}

.tray time {
    margin-left: 8px;
    font-size: 10px;
}

/* mouse pointers over the plot */
.pointer {
    width: 12px;
    height: 20px;
}

.pointer-plot {
    position: absolute;
    top: 289px;
    left: 289px;
}

.halo {
    position: absolute;
    top: 236px;
    left: 855px;
    width: 41px;
    height: 41px;
    padding: 21px 0 0 20px;
    border-radius: 50%;
    background: #02528a;
}

/* screen recorder bar */
.recorder {
    position: absolute;
    left: 428px;
    bottom: 27px;
    display: flex;
    align-items: center;
    width: 512px;
    height: 56px;
    padding-left: 15px;
    background: #fff;
}

.round {
    width: 38px;
    height: 38px;
    margin-right: 14px;
    border: 2px solid #111;
    border-radius: 50%;
    background: #fff;
}

.round svg {
    width: 17px;
    height: 17px;
}

.recorder time {
    width: 121px;
    padding-left: 22px;
    font: 19px "Open Sans", sans-serif;
    color: #333;
}

.level {
    width: 9px;
    height: 23px;
    margin: 0 17px 0 24px;
    background: repeating-linear-gradient(#fff 0 1px, transparent 1px 3px), repeating-linear-gradient(90deg, #cfe3f0 0 2px, #fff 2px 3px);
}

.rec {
    width: 24px;
    height: 24px;
    margin-right: 16px;
    border: none;
    background: none;
}

.rec svg {
    width: 24px;
    height: 24px;
}

.rec-menu {
    width: 33px;
    gap: 3px;
}

.rec svg.rec-arrow {
    width: 6px;
    height: 4px;
}
```
FILE: script.js
```js
const NS = 'http://www.w3.org/2000/svg';

function add(parent, name, attrs, text) {
    const el = document.createElementNS(NS, name);
    for (const key in attrs) el.setAttribute(key, attrs[key]);
    if (text) el.textContent = text;
    parent.appendChild(el);
    return el;
}

// small repeatable generator for the counting noise
let seed = 730;
function rnd() {
    seed = (seed * 16807) % 2147483647;
    return seed / 2147483647 - 0.5;
}

// fills the trace between the points and adds noise where it is not steep
function trace(points, noise) {
    let d = '';
    for (let i = 1; i < points.length; i++) {
        const [x0, y0] = points[i - 1];
        const [x1, y1] = points[i];
        const steep = Math.abs((y1 - y0) / (x1 - x0)) > 3;
        d += (d ? 'L' : 'M') + x0 + ' ' + y0;
        for (let x = x0 + 2; x < x1; x += 2) {
            const y = y0 + (y1 - y0) * (x - x0) / (x1 - x0);
            d += 'L' + x + ' ' + (y + (steep ? 0 : rnd() * noise)).toFixed(1);
        }
    }
    const last = points[points.length - 1];
    return d + 'L' + last[0] + ' ' + last[1];
}

// curve through the midpoints, without the leading move
function smooth(points) {
    let d = points[0].join(' ');
    for (let i = 1; i < points.length - 1; i++) {
        const [x, y] = points[i];
        const [nx, ny] = points[i + 1];
        d += `Q${x} ${y} ${(x + nx) / 2} ${(y + ny) / 2}`;
    }
    return d + 'L' + points[points.length - 1].join(' ');
}

/* overview */
const overviewPoints = [[348,310],[368,315],[395,318],[425,319],[465,320],[515,319],[525,317],[529,313],[533,318],[555,317],[592,313],[622,308],[648,305],[673,300],[677,292],[679,268],[682,258],[684,271],[687,252],[688,244],[690,262],[693,285],[697,298],[722,302],[732,305],[755,307],[760,305],[763,283],[766,307],[777,310],[793,309],[799,297],[803,310],[822,313],[828,307],[832,282],[836,308],[840,315],[853,313],[858,308],[863,313],[880,317],[893,315],[897,308],[900,317],[913,317],[917,307],[921,281],[924,298],[927,313],[937,317],[948,313],[963,317],[1003,318],[1037,317],[1041,314],[1050,318],[1083,316],[1103,318],[1123,317],[1133,313],[1143,317],[1177,317],[1187,312],[1197,318],[1205,313],[1215,318],[1232,317],[1235,302],[1240,297],[1243,312],[1248,317],[1293,318],[1298,315],[1302,308],[1307,315],[1323,318],[1335,315],[1340,318],[1377,319],[1390,315],[1402,313],[1410,318],[1437,319],[1450,316],[1473,315],[1483,318],[1500,317],[1510,321],[1540,322],[1557,320],[1572,322]];
const pdfLines = [[530,314],[644,320],[683,270],[688,246],[762,288],[800,306],[832,293],[861,312],[870,315],[896,312],[922,282],[951,315],[1040,315],[1053,319],[1064,319],[1082,316],[1125,318],[1131,316],[1135,316],[1203,316],[1213,318],[1225,320],[1241,296],[1288,320],[1301,315],[1333,316],[1335,316],[1387,318],[1397,317],[1403,315],[1414,319],[1458,316],[1472,315],[1497,318]];
const overview = document.getElementById('overview');
add(overview, 'path', { d: trace(overviewPoints, 3), fill: 'none', stroke: '#fff' });
pdfLines.forEach(([x, y]) => add(overview, 'path', { d: `M${x} ${y}V324`, stroke: '#3a9a40' }));

/* main plot */
const main = document.getElementById('main');
const BASE = 837;
const defs = add(main, 'defs', {});
function hatch(id, color, back) {
    const p = add(defs, 'pattern', { id: id, width: 8, height: 8, patternUnits: 'userSpaceOnUse' });
    add(p, 'rect', { width: 8, height: 8, fill: back });
    add(p, 'path', { d: 'M0 0l8 8M8 0l-8 8', stroke: color });
}
hatch('h-green', '#4fb652', '#000');
hatch('h-cyan', '#6fdcf0', '#00182c');
hatch('h-blue', '#5a78ff', '#050528');
hatch('h-red', '#e01838', '#5a0010');
hatch('h-purple', '#b038c0', '#38003c');
hatch('h-yellow', '#f4f08a', '#280008');
hatch('h-navy', '#1c28b8', '#06005c');

const hump = [[347,820],[385,818],[416,813],[448,804],[482,793],[508,778],[528,765],[545,751],[562,731],[577,717],[592,701],[602,697],[612,696],[632,700],[648,711],[668,728],[685,742],[715,766],[748,783],[775,796],[797,803],[837,811],[864,815],[903,820],[990,826],[1103,828],[1177,829],[1572,829]];
const floor = [[347,837],[1090,836],[1200,833],[1400,831],[1572,829]];
let area = 'M347 837L' + smooth(hump);
area += 'L' + floor.slice().reverse().map(p => p.join(' ')).join('L') + 'Z';
add(main, 'path', { d: area, fill: 'url(#h-green)' });

// centre, top, left and right half width, fill
const peaks = [
    [438, 805, 3, 3, 'h-blue'],
    [612, 527, 6, 4, 'h-cyan'],
    [693, 672, 3, 3, 'h-red'],
    [732, 728, 3, 4, 'none'],
    [768, 633, 3, 4, 'h-purple'],
    [795, 784, 4, 6, 'h-red'],
    [864, 601, 4, 4, 'h-yellow'],
    [893, 804, 4, 10, 'h-yellow'],
    [995, 808, 5, 14, 'h-navy'],
    [1209, 683, 5, 5, 'h-navy']
];
const peakPaths = peaks.map(([c, top, wl, wr, fill]) => {
    let d = '';
    for (let x = c - 60; x <= c + 60; x++) {
        const u = (x - c) / (x < c ? wl : wr);
        const f = 0.8 * Math.exp(-0.5 * u * u) + 0.2 / (1 + u * u / 2);
        d += (d ? 'L' : 'M') + x + ' ' + (BASE - (BASE - top) * f).toFixed(1);
    }
    if (fill !== 'none') add(main, 'path', { d: d + `V${BASE}H${c - 60}Z`, fill: `url(#${fill})` });
    return d;
});

const data = [[348,822],[360,825],[375,826],[390,824],[415,824],[428,818],[434,812],[436,790],[438,778],[440,785],[443,810],[448,816],[455,808],[465,803],[480,801],[495,795],[508,784],[528,772],[545,757],[562,737],[575,726],[590,704],[594,690],[597,655],[600,580],[602,500],[603,433],[605,433],[606,480],[607,508],[609,470],[610,410],[611,344],[612,344],[613,400],[614,470],[615,560],[617,625],[620,670],[624,698],[625,683],[627,700],[640,709],[648,716],[668,733],[678,742],[686,741],[688,722],[690,705],[692,620],[693,594],[694,620],[696,700],[699,735],[702,756],[712,757],[724,767],[728,740],[730,700],[732,671],[734,700],[737,745],[740,765],[746,778],[756,783],[761,765],[764,735],[766,640],[767,585],[768,585],[770,660],[771,720],[774,765],[776,786],[789,790],[793,760],[796,747],[799,775],[803,794],[808,793],[811,785],[815,800],[823,807],[832,803],[835,775],[837,745],[840,748],[843,785],[846,803],[853,802],[857,782],[860,700],[862,620],[864,575],[866,640],[868,700],[870,760],[873,785],[880,808],[887,805],[890,787],[894,778],[898,795],[903,797],[910,806],[920,815],[950,814],[983,812],[989,807],[992,800],[994,783],[998,794],[1004,805],[1012,807],[1018,803],[1024,805],[1028,816],[1034,802],[1039,798],[1043,810],[1054,811],[1062,818],[1072,810],[1080,798],[1084,806],[1089,794],[1095,775],[1100,792],[1107,813],[1117,817],[1142,815],[1146,803],[1149,787],[1152,771],[1156,777],[1160,805],[1166,812],[1168,795],[1171,776],[1177,797],[1184,817],[1191,807],[1201,798],[1204,765],[1207,710],[1209,681],[1211,700],[1214,750],[1217,785],[1220,817],[1223,805],[1232,812],[1243,817],[1258,815],[1264,799],[1268,808],[1273,795],[1277,748],[1281,770],[1284,803],[1291,800],[1295,814],[1302,819],[1309,800],[1314,791],[1318,802],[1322,817],[1340,820],[1360,822],[1366,798],[1370,802],[1375,791],[1382,800],[1385,790],[1387,777],[1391,793],[1397,808],[1413,820],[1429,822],[1434,802],[1440,794],[1446,803],[1452,814],[1457,815],[1462,795],[1466,795],[1471,810],[1480,824],[1486,815],[1489,808],[1496,814],[1503,828],[1515,825],[1533,833],[1545,828],[1555,825],[1571,832]];
add(main, 'path', { d: trace(data, 13), fill: 'none', stroke: '#fff' });
add(main, 'path', { d: 'M' + smooth(hump), fill: 'none', stroke: '#c03cc0' });
add(main, 'path', { d: 'M' + floor.map(p => p.join(' ')).join('L'), fill: 'none', stroke: '#d020d0', 'stroke-width': 2 });
peakPaths.forEach(d => add(main, 'path', { d: d, fill: 'none', stroke: '#c83cd0' }));
add(main, 'path', { d: 'M347 432H1563', stroke: '#7c7c7c', 'stroke-dasharray': '9 4 3 4' });
add(main, 'rect', { x: 1563, y: 428, width: 8, height: 8, fill: '#ff0' });

/* 2-theta axis */
const axis = document.getElementById('axis');
for (let t = 12; t <= 72; t += 2) {
    const x = ((161 + (t - 20) * 17.73) / 1103 * 100).toFixed(2) + '%';
    add(axis, 'line', { x1: x, x2: x, y1: 0, y2: 4 });
    if (t % 10 === 0) add(axis, 'text', { x: x, y: 15 }, String(t));
}

/* colour palette */
const colors = ['#fff', '#000', '#ff8080', '#f00', '#804040', '#800000', '#fffff0', '#ffff80', '#ff0', '#ff8000', '#fff', '#80ff00', '#0f0', '#008000', '#00ff80', '#c0dcc0', '#008080', '#008040', '#80ffff', '#0ff', '#004080', '#00f', '#0080ff', '#a6caf0', '#8080ff', '#000040', '#ff80c0', '#8080c0', '#800040', '#800080', '#ff80ff', '#f0f', '#ff0080', '#8000ff'];
colors.forEach(c => {
    const b = document.createElement('button');
    b.style.background = c;
    b.setAttribute('aria-label', c);
    document.getElementById('swatches').appendChild(b);
});

/* playback track */
const track = document.getElementById('track');
add(track, 'rect', { x: 2, y: 9, width: 338, height: 6, fill: '#0008cc' });
for (let i = 0; i <= 21; i++) add(track, 'rect', { x: 1 + i * 16, y: 16, width: 2, height: 4, fill: '#c8143c' });
add(track, 'rect', { x: 226, y: 6, width: 2, height: 14, fill: '#e00010' });
```
